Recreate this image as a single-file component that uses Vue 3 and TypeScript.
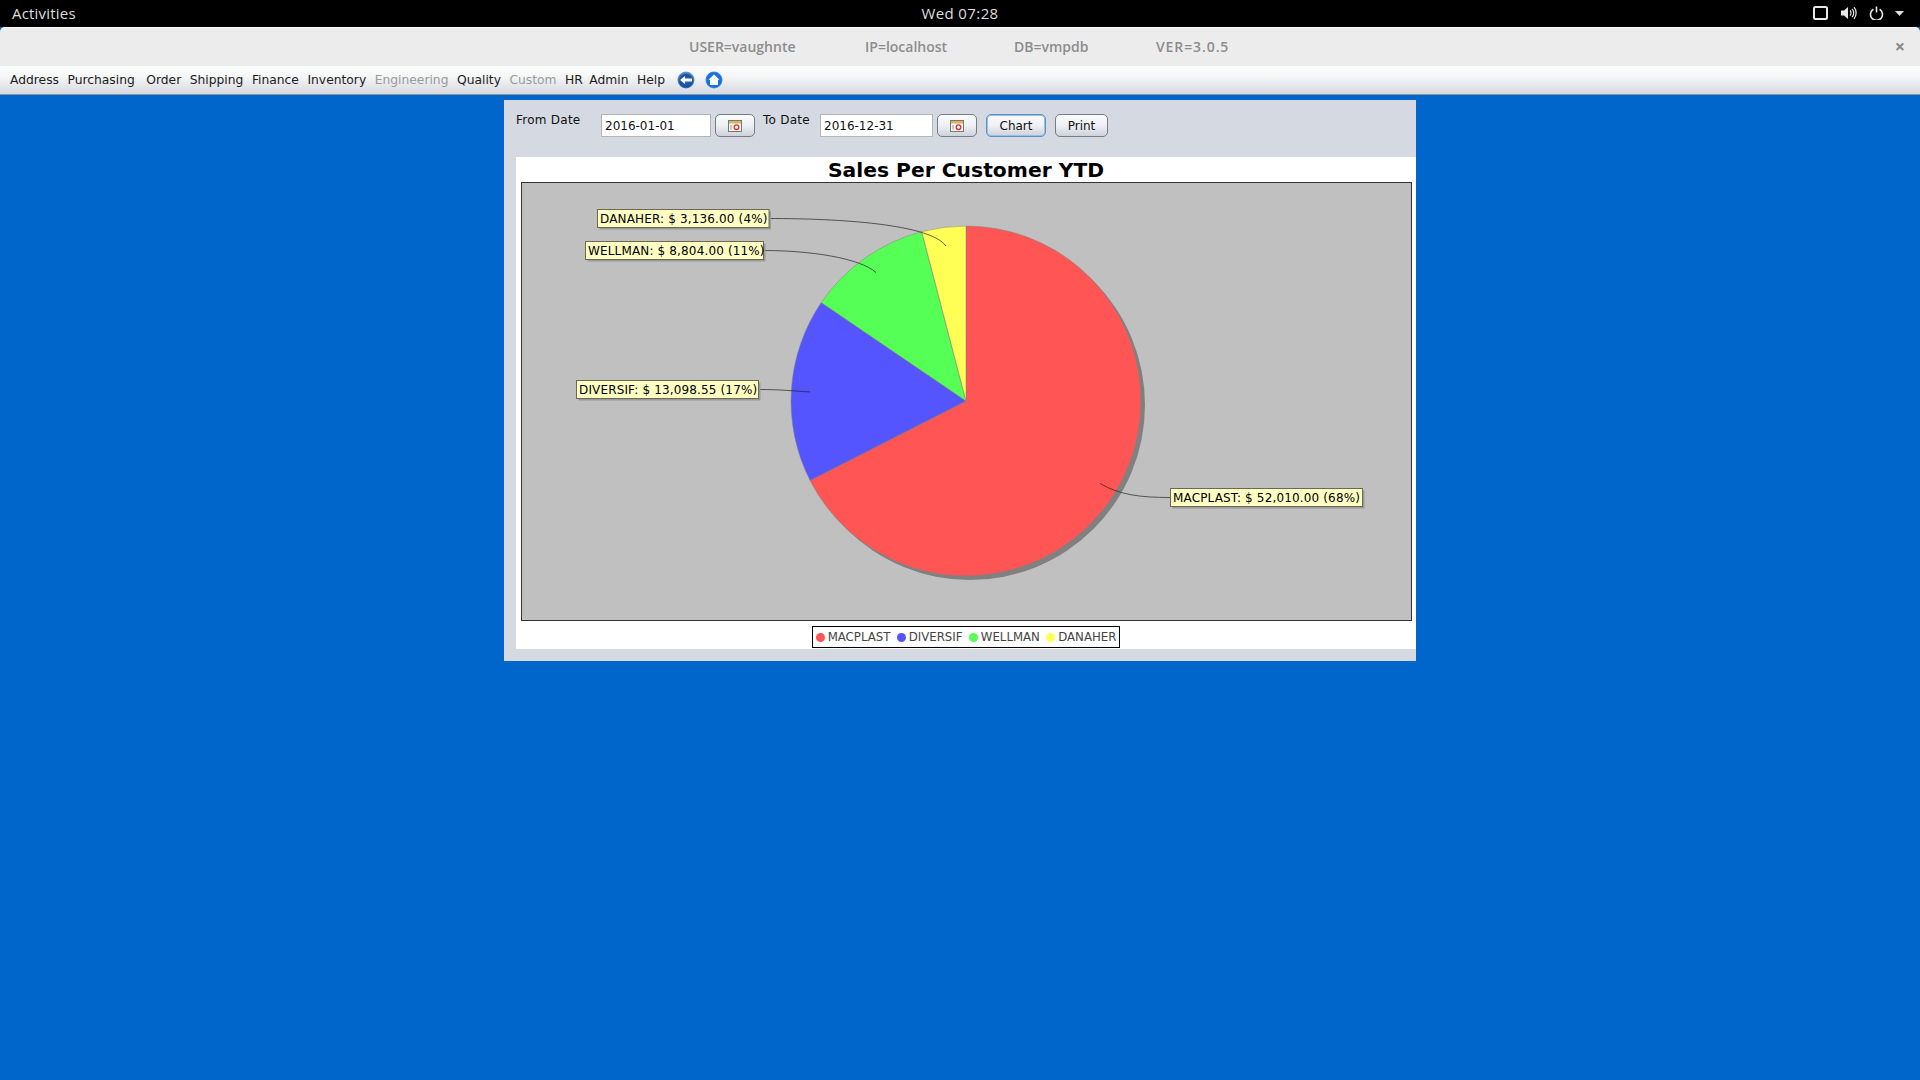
<script setup lang="ts">
interface Slice { name: string; color: string; value: number }
interface Callout { text: string; x: number; y: number; w: number; line: string }

const cx = 966
const cy = 401
const r = 175

const slices: Slice[] = [
  { name: 'MACPLAST', color: '#ff5555', value: 52010 },
  { name: 'DIVERSIF', color: '#5555ff', value: 13098.55 },
  { name: 'WELLMAN', color: '#55ff55', value: 8804 },
  { name: 'DANAHER', color: '#ffff55', value: 3136 },
]

const total = slices.reduce((s, a) => s + a.value, 0)
let acc = 0
const arcs = slices.map((s) => {
  const a0 = (acc / total) * Math.PI * 2
  acc += s.value
  const a1 = (acc / total) * Math.PI * 2
  const p = (a: number) => `${(cx + r * Math.sin(a)).toFixed(2)} ${(cy - r * Math.cos(a)).toFixed(2)}`
  const large = a1 - a0 > Math.PI ? 1 : 0
  return { color: s.color, d: `M${cx} ${cy}L${p(a0)}A${r} ${r} 0 ${large} 1 ${p(a1)}Z` }
})

const callouts: Callout[] = [
  { text: 'DANAHER: $ 3,136.00 (4%)', x: 597.5, y: 209.5, w: 171.5, line: 'M769 218.5C840 218.5 930 224 946 246' },
  { text: 'WELLMAN: $ 8,804.00 (11%)', x: 585.5, y: 241.5, w: 178, line: 'M763.5 250.5C810 250.5 860 258 876 272.5' },
  { text: 'DIVERSIF: $ 13,098.55 (17%)', x: 576.5, y: 380.5, w: 182, line: 'M758.5 389.5C780 389.5 795 391 810 392' },
  { text: 'MACPLAST: $ 52,010.00 (68%)', x: 1170.5, y: 488.5, w: 192, line: 'M1170.5 497.5C1140 497.5 1120 495 1100 483.5' },
]

const menu = [
  { label: 'Address' }, { label: 'Purchasing' }, { label: 'Order' }, { label: 'Shipping' },
  { label: 'Finance' }, { label: 'Inventory' }, { label: 'Engineering', off: true }, { label: 'Quality' },
  { label: 'Custom', off: true }, { label: 'HR' }, { label: 'Admin' }, { label: 'Help' },
]
</script>

<template>
  <div class="desktop">
    <header class="topbar">
      <span class="activities">Activities</span>
      <span class="clock">Wed 07:28</span>
      <div class="status">
        <svg width="15" height="14" viewBox="0 0 15 14"><rect x="1" y="1" width="13" height="12" rx="1.5" fill="none" stroke="#e8e8e8" stroke-width="2" /></svg>
        <svg width="17" height="14" viewBox="0 0 17 14">
          <path d="M1 4.5h3L8 1v12L4 9.5H1z" fill="#e8e8e8" />
          <path d="M10 4.5a3.5 3.5 0 0 1 0 5M12 2.8a6 6 0 0 1 0 8.4M14 1.2a9 9 0 0 1 0 11.6" fill="none" stroke="#e8e8e8" stroke-width="1.2" />
        </svg>
        <svg width="15" height="14" viewBox="0 0 15 14">
          <path d="M4.4 3.2a6 6 0 1 0 6.2 0" fill="none" stroke="#e8e8e8" stroke-width="1.6" />
          <path d="M7.5 .5v6" stroke="#e8e8e8" stroke-width="1.6" />
        </svg>
        <svg width="9" height="5" viewBox="0 0 9 5"><path d="M0 0h9L4.5 5z" fill="#e0e0e0" /></svg>
      </div>
    </header>

    <section class="window">
      <div class="titlebar">
        <div class="info">
          <span class="i1">USER=vaughnte</span>
          <span class="i2">IP=localhost</span>
          <span class="i3">DB=vmpdb</span>
          <span class="i4">VER=3.0.5</span>
        </div>
        <span class="close">×</span>
      </div>
      <nav class="menubar">
        <span v-for="m in menu" :key="m.label" class="item" :class="{ off: m.off }">{{ m.label }}</span>
        <svg class="nav-ico back" width="18" height="18" viewBox="0 0 18 18">
          <defs>
            <radialGradient id="orb" cx="50%" cy="55%" r="60%">
              <stop offset="0" stop-color="#2a68bd" />
              <stop offset=".6" stop-color="#164f9f" />
              <stop offset="1" stop-color="#9cc4ea" />
            </radialGradient>
            <radialGradient id="orb2" cx="50%" cy="50%" r="55%">
              <stop offset="0" stop-color="#1f7fe6" />
              <stop offset=".75" stop-color="#1a6fd8" />
              <stop offset="1" stop-color="#6fb0ee" />
            </radialGradient>
          </defs>
          <circle cx="9" cy="9" r="8.5" fill="url(#orb)" />
          <path d="M3 9l5-4v2.5h7v3H8V13z" fill="#fff" />
        </svg>
        <svg class="nav-ico" width="18" height="18" viewBox="0 0 18 18">
          <circle cx="9" cy="9" r="8.5" fill="url(#orb2)" />
          <path d="M9 3.5l5.5 5.2H13V14H5V8.700H3.500z" fill="#fff" />
        </svg>
      </nav>
    </section>

    <main class="content">
      <div class="panel">
        <div class="toolbar">
          <span class="lbl from">From Date</span>
          <input class="field f1" value="2016-01-01" />
          <button class="btn cal">
            <svg width="14" height="12" viewBox="0 0 14 12">
              <rect x=".5" y=".5" width="13" height="11" fill="#f4f4f0" stroke="#777" />
              <rect x="1" y="1" width="12" height="2.500" fill="#d9b65a" />
              <circle cx="8.500" cy="7.200" r="2.300" fill="none" stroke="#d8342c" stroke-width="1.300" />
              <path d="M3 5v4.500" stroke="#999" />
            </svg>
          </button>
          <span class="lbl to">To Date</span>
          <input class="field f2" value="2016-12-31" />
          <button class="btn cal">
            <svg width="14" height="12" viewBox="0 0 14 12">
              <rect x=".5" y=".5" width="13" height="11" fill="#f4f4f0" stroke="#777" />
              <rect x="1" y="1" width="12" height="2.500" fill="#d9b65a" />
              <circle cx="8.500" cy="7.200" r="2.300" fill="none" stroke="#d8342c" stroke-width="1.300" />
              <path d="M3 5v4.500" stroke="#999" />
            </svg>
          </button>
          <button class="btn chart">Chart</button>
          <button class="btn print">Print</button>
        </div>

        <div class="chart-area">
          <h1 class="title">Sales Per Customer YTD</h1>
          <div class="plot">
            <svg class="plot-svg" width="889" height="437" viewBox="522 183 889 437">
              <circle :cx="cx + 4" :cy="cy + 4" :r="r" fill="#808080" />
              <path v-for="a in arcs" :key="a.color" :d="a.d" :fill="a.color" stroke="#808080" stroke-width=".5" />
              <path v-for="c in callouts" :key="c.line" :d="c.line" fill="none" stroke="#222" stroke-width=".7" />
              <g v-for="c in callouts" :key="c.text">
                <rect :x="c.x + 2" :y="c.y + 2" :width="c.w" height="18" fill="#9a9a9a" />
                <rect :x="c.x" :y="c.y" :width="c.w" height="18" fill="#ffffc4" stroke="#6a6a50" />
                <text :x="c.x + 2.500" :y="c.y + 13.500" class="clabel">{{ c.text }}</text>
              </g>
            </svg>
          </div>
          <div class="legend">
            <span v-for="s in slices" :key="s.name" class="entry">
              <i class="dot" :style="{ background: s.color }"></i>{{ s.name }}
            </span>
          </div>
        </div>
      </div>
    </main>
  </div>
</template>

<style>
html, body { margin: 0; background: #0066cc; }
</style>

<style scoped>
.desktop {
  width: 1920px;
  height: 1080px;
  overflow: hidden;
  display: flex;
  flex-direction: column;
  background: #0066cc;
  font-family: "DejaVu Sans", sans-serif;
}
.topbar {
  height: 27px;
  box-sizing: border-box;
  padding-bottom: 1px;
  flex: none;
  background: #000;
  color: #dedede;
  display: grid;
  grid-template-columns: 1fr auto 1fr;
  align-items: center;
  font-family: "Open Sans", sans-serif;
  font-size: 15px;
}
.activities { margin-left: 12px; letter-spacing: .2px; }
.clock { letter-spacing: .4px; }
.status {
  display: flex;
  justify-content: flex-end;
  align-items: center;
  padding-right: 16px;
}
.status svg:nth-child(1) { margin-right: 12px; }
.status svg:nth-child(2) { margin-right: 12px; }
.status svg:nth-child(3) { margin-right: 11px; }

.window { flex: none; }
.titlebar {
  height: 39px;
  box-sizing: border-box;
  background: #ececec;
  border-top: 1px solid #fff;
  border-radius: 5px 5px 0 0;
  display: flex;
  align-items: center;
  justify-content: space-between;
  padding: 0 15px 2px 689px;
  color: #8c8c8c;
  font-family: "Open Sans", sans-serif;
  font-weight: 600;
  font-size: 14px;
}
.info { display: flex; }
.i1 { width: 176px; }
.i2 { width: 149px; }
.i3 { width: 142px; }
.i4 { letter-spacing: .9px; }
.close { font-size: 18px; line-height: 1; font-weight: 700; color: #888; }
.menubar {
  height: 29px;
  box-sizing: border-box;
  background: linear-gradient(#fbfcfc 0%, #f6f7f7 35%, #d6d9e0 100%);
  border-bottom: 1px solid #8f949c;
  display: flex;
  align-items: center;
  gap: 8.500px;
  padding: 0 0 0 10px;
  font-size: 12.300px;
  color: #1c1c1c;
}
.item.off { color: #9a9a9a; }
.item:nth-child(2) { margin-right: 3px; }
.item:nth-child(11) { margin-left: -2px; }
.nav-ico { margin-left: 1.500px; }
.nav-ico.back { margin-left: 3.500px; }

.content {
  flex: 1;
  display: flex;
  justify-content: center;
  padding-top: 5px;
}
.panel {
  width: 912px;
  height: 561px;
  background: #d5d9e2;
  display: flex;
  flex-direction: column;
}
.toolbar {
  height: 57px;
  flex: none;
  box-sizing: border-box;
  display: flex;
  align-items: flex-start;
  padding: 14px 0 0 12px;
  font-size: 12px;
  color: #111;
}
.lbl { line-height: 14px; margin-top: -1px; letter-spacing: .25px; }
.from { width: 85px; }
.to { margin: -1px 9px 0 8px; width: 48px; white-space: nowrap; }
.field {
  box-sizing: border-box;
  height: 23px;
  border: 1px solid #b4b4b4;
  background: #fff;
  padding: 0 3px;
  font: 12px "DejaVu Sans", sans-serif;
  color: #111;
  border-radius: 0;
  outline: none;
}
.f1 { width: 110px; }
.f2 { width: 113px; }
.btn {
  box-sizing: border-box;
  height: 23px;
  padding: 0;
  border: 1px solid #777b82;
  border-radius: 5px;
  background: linear-gradient(#fafbfc 0%, #eef0f4 50%, #cdd1da 100%);
  font: 12px "DejaVu Sans", sans-serif;
  color: #111;
  display: flex;
  align-items: center;
  justify-content: center;
}
.cal { width: 40px; margin-left: 4px; }
.chart {
  width: 60px;
  margin-left: 9px;
  border-color: #5f8fc4;
  box-shadow: inset 0 0 0 1px #9cc0e4;
}
.print { width: 53px; margin-left: 9px; }

.chart-area {
  margin-left: 12px;
  height: 492px;
  background: #fff;
  display: flex;
  flex-direction: column;
  align-items: center;
}
.title {
  margin: 0;
  height: 25px;
  line-height: 26px;
  font-size: 20.300px;
  font-weight: 700;
  color: #000;
}
.plot {
  width: 891px;
  height: 439px;
  box-sizing: border-box;
  border: 1px solid #333;
  background: #c0c0c0;
  margin-left: 1px;
}
.plot-svg { display: block; }
.clabel {
  font-family: "DejaVu Sans", sans-serif;
  font-size: 12px;
  letter-spacing: .15px;
  fill: #000;
}
.legend {
  margin-top: 5px;
  height: 22px;
  box-sizing: border-box;
  border: 1px solid #000;
  display: flex;
  align-items: center;
  padding: 0 3px;
  gap: 6.300px;
  font-size: 11.750px;
  color: #444;
}
.entry { display: flex; align-items: center; }
.dot {
  width: 9px;
  height: 9px;
  border-radius: 50%;
  margin-right: 3px;
}
</style>
